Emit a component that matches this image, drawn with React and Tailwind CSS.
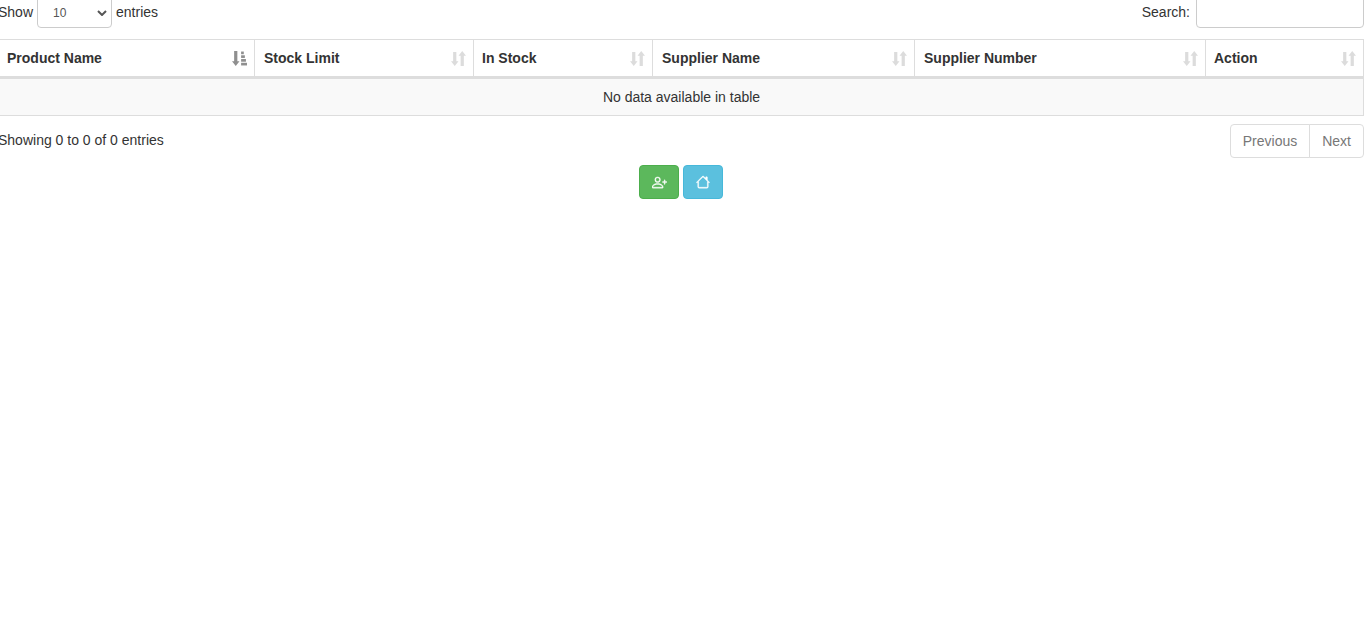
import { BsPersonPlus, BsHouse } from 'react-icons/bs';

function SortIcon({ active }) {
    return (
        <svg width="15" height="15" viewBox="0 0 14 14" className={active ? 'text-[#8f8f8f]' : 'text-[#dcdcdc]'} fill="currentColor">
            {active ? (
                <>
                    <path d="M2 0h3v9.500h2L3.500 14 0 9.500h2z" />
                    <rect x="8.500" y="0.500" width="2.500" height="2.500" />
                    <rect x="8.500" y="4" width="3.500" height="2.500" />
                    <rect x="8.500" y="7.500" width="4.500" height="2.500" />
                    <rect x="8.500" y="11" width="5.500" height="2.500" />
                </>
            ) : (
                <>
                    <path d="M2 1h3v8.500h2L3.500 14 0 9.500h2z" />
                    <path d="M9 14h3V4.500h2L10.500 0 7 4.500h2z" />
                </>
            )}
        </svg>
    );
}

const columns = [
    { name: 'Product Name', width: 'w-[255px]', pad: 'pl-[7px] pr-[7px]', active: true },
    { name: 'Stock Limit', width: 'w-[219px]', pad: 'pl-[9px] pr-[7px]' },
    { name: 'In Stock', width: 'w-[179px]', pad: 'pl-[8px] pr-[7px]' },
    { name: 'Supplier Name', width: 'w-[262px]', pad: 'pl-[9px] pr-[7px]' },
    { name: 'Supplier Number', width: 'w-[291px]', pad: 'pl-[9px] pr-[7px]' },
    { name: 'Action', width: 'w-[158px]', pad: 'pl-[8px] pr-[7px]' },
];

export default function App() {
    return (
        <div className="w-[1364px] h-[621px] overflow-hidden bg-white text-[14px] leading-[20px] text-[#333] font-['Liberation_Sans',Arial,sans-serif]">
            <div className="flex items-center justify-between -mt-[6px]">
                <div className="flex items-center -ml-[2px]">
                    <span className="mt-[2px]">Show</span>
                    <div className="relative ml-[4px]">
                        <select className="block w-[75px] h-[34px] pl-[15px] pt-[4px] appearance-none text-[12px] text-[#555] bg-white border border-[#ccc] rounded-[4px]">
                            <option>10</option>
                        </select>
                        <svg className="absolute right-[5px] top-[16px] pointer-events-none" width="10" height="6" viewBox="0 0 10 6" fill="none" stroke="#555" strokeWidth="2">
                            <path d="M1 1l4 4 4-4" />
                        </svg>
                    </div>
                    <span className="ml-[4px] mt-[2px]">entries</span>
                </div>
                <div className="flex items-center">
                    <span className="mt-[2px]">Search:</span>
                    <input className="ml-[6px] w-[168px] h-[34px] bg-white border border-[#ccc] rounded-[4px]" />
                </div>
            </div>

            <table className="mt-[11px] w-[1364px] table-fixed border-separate border-spacing-0">
                <thead>
                    <tr>
                        {columns.map((col) => (
                            <th key={col.name} className={`${col.width} ${col.pad} h-[39px] border-t border-r border-b-2 border-[#ddd] text-left font-bold`}>
                                <div className="flex items-center justify-between">
                                    <span>{col.name}</span>
                                    <SortIcon active={col.active} />
                                </div>
                            </th>
                        ))}
                    </tr>
                </thead>
                <tbody>
                    <tr className="bg-[#f9f9f9]">
                        <td colSpan={6} className="h-[38px] border-t border-r border-b border-[#ddd] text-center">No data available in table</td>
                    </tr>
                </tbody>
            </table>

            <div className="flex items-start justify-between mt-[8px]">
                <div className="pt-[6px] -ml-[2px]">Showing 0 to 0 of 0 entries</div>
                <div className="flex text-[#777]">
                    <button className="h-[34px] px-[12px] bg-white border border-[#ddd] rounded-l-[4px]">Previous</button>
                    <button className="h-[34px] px-[12px] -ml-px bg-white border border-[#ddd] rounded-r-[4px]">Next</button>
                </div>
            </div>

            <div className="flex justify-center gap-[4px] mt-[7px] pr-[2px]">
                <button className="flex items-center justify-center w-[40px] h-[34px] bg-[#5cb85c] border border-[#4cae4c] rounded-[4px] text-white">
                    <BsPersonPlus size={15} stroke="currentColor" strokeWidth={0.4} />
                </button>
                <button className="flex items-center justify-center w-[40px] h-[34px] bg-[#5bc0de] border border-[#46b8da] rounded-[4px] text-white">
                    <BsHouse size={14} stroke="currentColor" strokeWidth={0.5} />
                </button>
            </div>
        </div>
    );
}
